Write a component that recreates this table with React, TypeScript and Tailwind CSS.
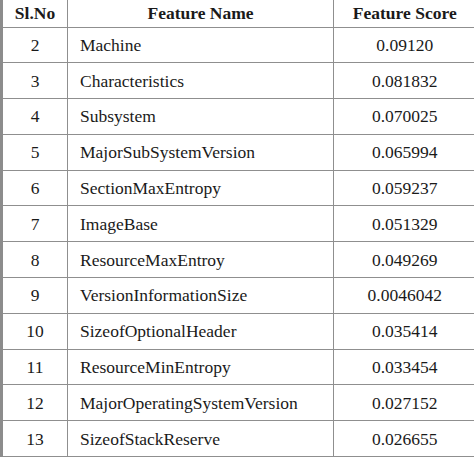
const rows = [
  { no: "2", name: "Machine", score: "0.09120" },
  { no: "3", name: "Characteristics", score: "0.081832" },
  { no: "4", name: "Subsystem", score: "0.070025" },
  { no: "5", name: "MajorSubSystemVersion", score: "0.065994" },
  { no: "6", name: "SectionMaxEntropy", score: "0.059237" },
  { no: "7", name: "ImageBase", score: "0.051329" },
  { no: "8", name: "ResourceMaxEntroy", score: "0.049269" },
  { no: "9", name: "VersionInformationSize", score: "0.0046042" },
  { no: "10", name: "SizeofOptionalHeader", score: "0.035414" },
  { no: "11", name: "ResourceMinEntropy", score: "0.033454" },
  { no: "12", name: "MajorOperatingSystemVersion", score: "0.027152" },
  { no: "13", name: "SizeofStackReserve", score: "0.026655" },
];

export default function App() {
  return (
    <div className="w-[474px] h-[457px] overflow-hidden bg-white font-['Liberation_Serif',serif] text-[17.5px] text-[#1a1a1a]">
      <table className="w-[474px] table-fixed border-collapse border-l-[3px] border-l-[#8c8c8c]">
        <colgroup>
          <col className="w-[66px]" />
          <col className="w-[266px]" />
          <col className="w-[142px]" />
        </colgroup>
        <thead>
          <tr className="h-[27px] border-b border-[#8f8f8f]">
            <th className="p-0 text-center font-bold border-r border-[#8f8f8f]">Sl.No</th>
            <th className="p-0 text-center font-bold border-r border-[#8f8f8f]">Feature Name</th>
            <th className="p-0 text-center font-bold">Feature Score</th>
          </tr>
        </thead>
        <tbody>
          {rows.map((r) => (
            <tr key={r.no} className="h-[35.8px] border-b border-[#8f8f8f]">
              <td className="p-0 text-center border-r border-[#8f8f8f]">{r.no}</td>
              <td className="p-0 pl-[12px] text-left border-r border-[#8f8f8f]">{r.name}</td>
              <td className="p-0 text-center">{r.score}</td>
            </tr>
          ))}
        </tbody>
      </table>
    </div>
  );
}
